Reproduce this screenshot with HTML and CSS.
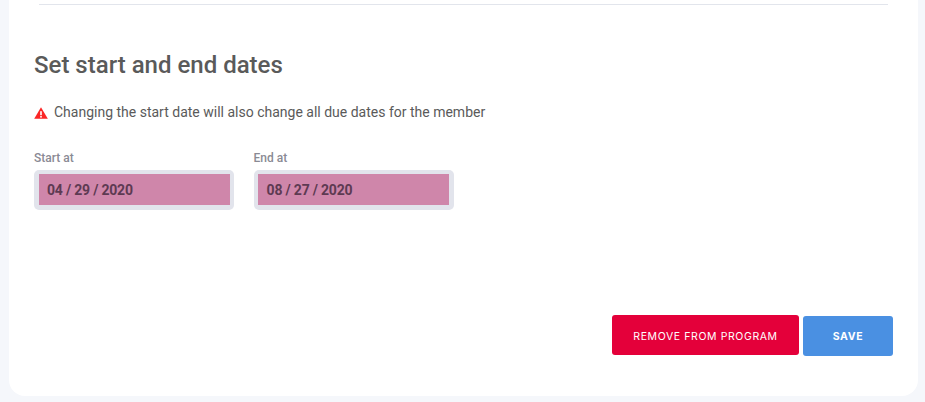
FILE: index.html
```html
<!DOCTYPE html>
<html lang="en">
<head>
<meta charset="utf-8">
<title>Set start and end dates</title>
<link rel="stylesheet" href="styles.css">
</head>
<body>
<main class="card">
  <hr class="rule">
  <section class="content">
    <h2 class="title">Set start and end dates</h2>
    <p class="warning">
      <svg class="warning-icon" viewBox="0 0 14 12" width="14" height="12" aria-hidden="true">
        <path fill="#fb2626" d="M7 .3 13.8 11.8H.2Z"/>
        <rect x="6.2" y="4.2" width="1.6" height="4" fill="#fff"/>
        <rect x="6.2" y="9" width="1.6" height="1.6" fill="#fff"/>
      </svg>
      <span>Changing the start date will also change all due dates for the member</span>
    </p>
    <div class="fields">
      <div class="field">
        <label class="label">Start at</label>
        <div class="date-box"><span class="date-value">04 / 29 / 2020</span></div>
      </div>
      <div class="field">
        <label class="label">End at</label>
        <div class="date-box"><span class="date-value">08 / 27 / 2020</span></div>
      </div>
    </div>
  </section>
  <div class="actions">
    <button class="btn btn-remove">REMOVE FROM PROGRAM</button>
    <button class="btn btn-save">SAVE</button>
  </div>
</main>
</body>
</html>
```
FILE: styles.css
```css
* { box-sizing: border-box; }
html, body { margin: 0; height: 100%; }
body {
  background: #f5f7fb;
  font-family: Roboto, "Liberation Sans", sans-serif;
  overflow: hidden;
}
.card {
  width: 909px;
  height: 396px;
  margin-left: 9px;
  background: #fff;
  border-radius: 0 0 16px 16px;
  padding-top: 4px;
  display: flex;
  flex-direction: column;
}
.rule {
  margin: 0 30px;
  border: 0;
  height: 1px;
  background: #e2e5ec;
}
.content { padding: 0 25px; }
.title {
  margin: 45px 0 0;
  font-size: 24px;
  line-height: 30px;
  font-weight: 500;
  color: #5a5a5a;
}
.warning {
  margin: 22px 0 0;
  display: flex;
  align-items: center;
  gap: 6px;
  font-size: 14px;
  line-height: 20px;
  color: #5a5a5a;
}
.warning-icon { flex: none; margin-top: 2px; }
.fields {
  margin-top: 28px;
  display: flex;
  gap: 19.6px;
}
.field { width: 200px; }
.label {
  display: block;
  font-size: 12px;
  font-weight: 500;
  line-height: 16px;
  color: #8a8a94;
}
.date-box {
  margin-top: 4px;
  height: 40px;
  padding: 4px 4.5px;
  background: #e2e4ec;
  border-radius: 5px;
}
.date-value {
  display: block;
  height: 31px;
  padding: 1px 0 0 8.5px;
  background: #cf86aa;
  font-size: 14px;
  font-weight: 700;
  letter-spacing: -0.2px;
  line-height: 31px;
  color: #5d3a52;
}
.actions {
  margin-top: 105px;
  padding-right: 25px;
  display: flex;
  justify-content: flex-end;
  gap: 4px;
}
.btn {
  border: 0;
  border-radius: 3px;
  height: 40px;
  padding: 2px 0 0;
  color: #fff;
  font-family: Inter, sans-serif;
  font-size: 10.5px;
}
.btn-remove {
  width: 187px;
  background: #e4003a;
  letter-spacing: 0.6px;
}
.btn-save {
  width: 90px;
  margin-top: 1px;
  padding: 0;
  background: #4a90e2;
  font-weight: 700;
  letter-spacing: 0.7px;
}
```
